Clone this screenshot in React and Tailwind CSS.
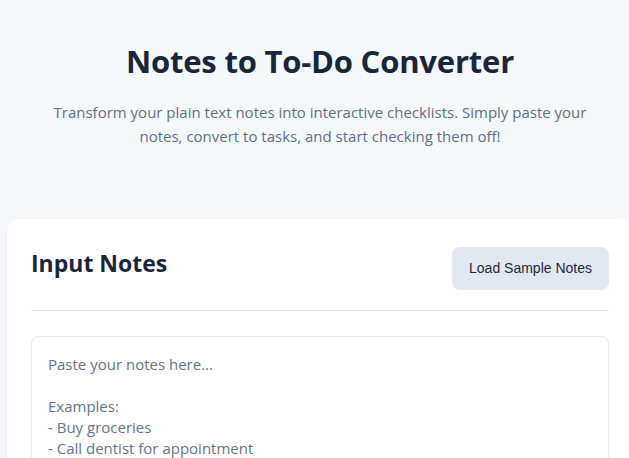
import React, { useState } from 'react';

const SAMPLE = `- Buy groceries
- Call dentist for appointment
- Finish quarterly report
- Water the plants`;

function App() {
  const [notes, setNotes] = useState('');

  return (
    <div className="min-h-screen overflow-hidden bg-[#f5f8fb] text-[#1e293b]" style={{ fontFamily: "'Open Sans', 'Noto Sans', sans-serif" }}>
      <div className="w-[640px] px-[7px]">
        <header className="pt-[41px] pb-[71px] text-center">
          <h1 className="text-[31px] leading-[40px] font-bold tracking-[-0.2px] text-[#1a2638]">Notes to To-Do Converter</h1>
          <p className="mx-auto mt-[19px] w-[560px] text-[15px] leading-[24px] text-[#5f6f84]">
            Transform your plain text notes into interactive checklists. Simply paste your notes, convert to tasks, and start checking them off!
          </p>
        </header>

        <section className="rounded-xl bg-white px-6 pt-7 pb-6 shadow-[0_1px_3px_rgba(15,23,42,0.06)]">
          <div className="flex items-start justify-between border-b border-[#e2e8f0] pb-5">
            <h2 className="pt-[1px] text-[23px] font-bold leading-[30px] text-[#1a2638]">Input Notes</h2>
            <button
              onClick={() => setNotes(SAMPLE)}
              className="h-[43px] rounded-lg bg-[#e2e8f0] px-[17px] text-[14px] text-[#1e293b]"
              style={{ fontFamily: "'Liberation Sans', Arial, sans-serif" }}
            >
              Load Sample Notes
            </button>
          </div>

          <textarea
            value={notes}
            onChange={(e) => setNotes(e.target.value)}
            rows={8}
            className="mt-[25px] block w-full resize-none rounded-lg border border-[#e2e8f0] px-4 pt-[17px] pb-4 text-[15px] leading-[21px] placeholder:text-[#64748b] focus:outline-none"
            placeholder={'Paste your notes here...\n\nExamples:\n- Buy groceries\n- Call dentist for appointment\n- Finish quarterly report'}
          />
        </section>
      </div>
    </div>
  );
}

export default App;
